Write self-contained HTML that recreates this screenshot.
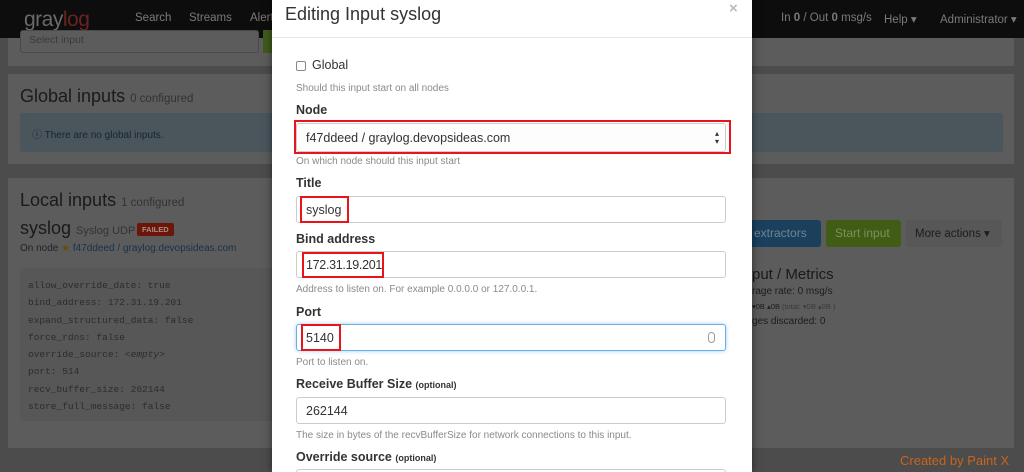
<!DOCTYPE html>
<html style="overflow:hidden"><head><style>
*{box-sizing:border-box;margin:0;padding:0}
html,body{width:1024px;height:472px;overflow:hidden}
body{background:#4c4c4c;font-family:"Liberation Sans",sans-serif;position:relative}
.a{position:absolute}
.nav{left:0;top:0;width:1024px;height:38px;background:#0d0d0d;color:#7a7a7a;font-size:11.5px}
.panel{background:#5c5c5c;left:8px;width:1006px}
.pre{font-family:"Liberation Mono",monospace;font-size:9.5px;color:#2c2c2c;line-height:17.3px}
.modal{left:272px;top:0;width:480px;height:472px;background:#fff;box-shadow:0 0 8px rgba(0,0,0,.5);overflow:hidden}
.lbl{font-weight:bold;font-size:12.5px;color:#333}
.help{font-size:10px;color:#8a8a8a}
.inp{left:24px;width:430px;height:27px;border:1px solid #ccc;border-radius:3px;font-size:12.5px;color:#333;padding:6px 9px}
.red{border:2px solid #e8131b}
</style></head><body>
<div class="a nav">
  <div class="a" style="left:24px;top:8px;font-size:21px;color:#6a6a6a;letter-spacing:-0.5px">gray<span style="color:#6a2222">log</span></div>
  <div class="a" style="left:135px;top:12px">Search</div>
  <div class="a" style="left:189px;top:12px">Streams</div>
  <div class="a" style="left:250px;top:12px">Alerts</div>
  <div class="a" style="left:781px;top:12px">In <b>0</b> / Out <b>0</b> msg/s</div>
  <div class="a" style="left:884px;top:12px">Help ▾</div>
  <div class="a" style="left:940px;top:12px">Administrator ▾</div>
</div>
<div class="a panel" style="top:38px;height:28px"></div>
<div class="a" style="left:20px;top:30px;width:239px;height:23px;border:1px solid #4a4a4a;border-radius:3px;background:#5c5c5c;font-size:10.5px;color:#3a3a3a;padding:3px 8px">Select input</div>
<div class="a" style="left:263px;top:30px;width:10px;height:23px;background:#3f5a1c"></div>
<div class="a panel" style="top:74px;height:90px"></div>
<div class="a" style="left:20px;top:86px;font-size:18px;color:#1a1a1a">Global inputs <span style="font-size:11.5px;color:#333">0 configured</span></div>
<div class="a" style="left:20px;top:113px;width:983px;height:39px;background:#4a555c;border-radius:3px;font-size:10px;color:#18252f;padding:13px 12px">ⓘ There are no global inputs.</div>
<div class="a panel" style="top:178px;height:270px"></div>
<div class="a" style="left:20px;top:190px;font-size:18px;color:#1a1a1a">Local inputs <span style="font-size:11.5px;color:#333">1 configured</span></div>
<div class="a" style="left:20px;top:218px;font-size:18px;color:#1a1a1a">syslog <span style="font-size:11px;color:#333">Syslog UDP</span></div>
<div class="a" style="left:137px;top:223px;background:#6a1608;color:#b08a8a;font-size:7.5px;font-weight:bold;padding:2px 5px;border-radius:2px">FAILED</div>
<div class="a" style="left:20px;top:243px;font-size:10px;color:#222">On node <span style="color:#6a4e00">★</span> <span style="color:#18324c">f47ddeed / graylog.devopsideas.com</span></div>
<div class="a pre" style="left:20px;top:268px;width:300px;height:153px;background:#575757;border-radius:3px;padding:9px 8px">allow_override_date: true<br>bind_address: 172.31.19.201<br>expand_structured_data: false<br>force_rdns: false<br>override_source: <i>&lt;empty&gt;</i><br>port: 514<br>recv_buffer_size: 262144<br>store_full_message: false</div>
<div class="a" style="left:740px;top:220px;width:81px;height:27px;background:#1a405e;border-radius:3px;color:#6f8595;font-size:12px;padding:6px 4px;white-space:nowrap">e extractors</div>
<div class="a" style="left:826px;top:220px;width:75px;height:27px;background:#415c15;border-radius:3px;color:#7f905c;font-size:12px;padding:6px 9px;white-space:nowrap">Start input</div>
<div class="a" style="left:906px;top:220px;width:96px;height:27px;background:#575757;border-radius:3px;color:#1c1c1c;font-size:11.5px;padding:6px 9px;white-space:nowrap">More actions ▾</div>
<div class="a" style="left:752px;top:266px;font-size:15px;color:#1a1a1a">put / Metrics</div>
<div class="a" style="left:752px;top:284px;font-size:10px;color:#1c1c1c;line-height:15px">rage rate: 0 msg/s<br><span style="font-size:7.5px">▾0B ▴0B <span style="color:#3a3a3a">(total: ▾0B ▴0B )</span></span><br>ges discarded: 0</div>
<div class="a" style="left:900px;top:453px;font-size:13px;color:#c8641c">Created by Paint X</div>

<div class="a modal">
  <div class="a" style="left:13px;top:4px;font-size:18px;color:#333">Editing Input syslog</div>
  <div class="a" style="left:457px;top:0px;font-size:15px;color:#bbb;font-weight:bold">×</div>
  <div class="a" style="left:0;top:37px;width:480px;height:1px;background:#e5e5e5"></div>
  <div class="a" style="left:24px;top:61px;width:10px;height:10px;border:1px solid #888;border-radius:2px"></div>
  <div class="a" style="left:40px;top:58px;font-size:12.5px;color:#333">Global</div>
  <div class="a help" style="left:24px;top:83px">Should this input start on all nodes</div>
  <div class="a lbl" style="left:24px;top:103px">Node</div>
  <div class="a inp" style="top:123px;height:29px;background:#fdfdfd;padding-top:7px">f47ddeed / graylog.devopsideas.com<span class="a" style="right:6px;top:6px;font-size:8px;line-height:8px;color:#333">▴<br>▾</span></div>
  <div class="a red" style="left:22px;top:120px;width:437px;height:34px"></div>
  <div class="a help" style="left:24px;top:156px">On which node should this input start</div>
  <div class="a lbl" style="left:24px;top:176px">Title</div>
  <div class="a inp" style="top:196px">syslog</div>
  <div class="a red" style="left:28px;top:196px;width:49px;height:27px"></div>
  <div class="a lbl" style="left:24px;top:232px">Bind address</div>
  <div class="a inp" style="top:251px;letter-spacing:-0.3px">172.31.19.201</div>
  <div class="a red" style="left:30px;top:252px;width:82px;height:26px"></div>
  <div class="a help" style="left:24px;top:284px">Address to listen on. For example 0.0.0.0 or 127.0.0.1.</div>
  <div class="a lbl" style="left:24px;top:305px">Port</div>
  <div class="a inp" style="top:324px;border-color:#66afe9;box-shadow:0 0 4px rgba(102,175,233,.6)">5140<span class="a" style="right:10px;top:7px;width:7px;height:11px;border:1px solid #999;border-radius:4px"></span></div>
  <div class="a red" style="left:29px;top:324px;width:40px;height:27px"></div>
  <div class="a help" style="left:24px;top:357px">Port to listen on.</div>
  <div class="a lbl" style="left:24px;top:377px">Receive Buffer Size <span style="font-size:9px">(optional)</span></div>
  <div class="a inp" style="top:397px">262144</div>
  <div class="a help" style="left:24px;top:430px">The size in bytes of the recvBufferSize for network connections to this input.</div>
  <div class="a lbl" style="left:24px;top:450px">Override source <span style="font-size:9px">(optional)</span></div>
  <div class="a" style="left:24px;top:469px;width:430px;height:3px;border:1px solid #ccc;border-bottom:none;border-radius:3px 3px 0 0"></div>
</div>
</body></html>
